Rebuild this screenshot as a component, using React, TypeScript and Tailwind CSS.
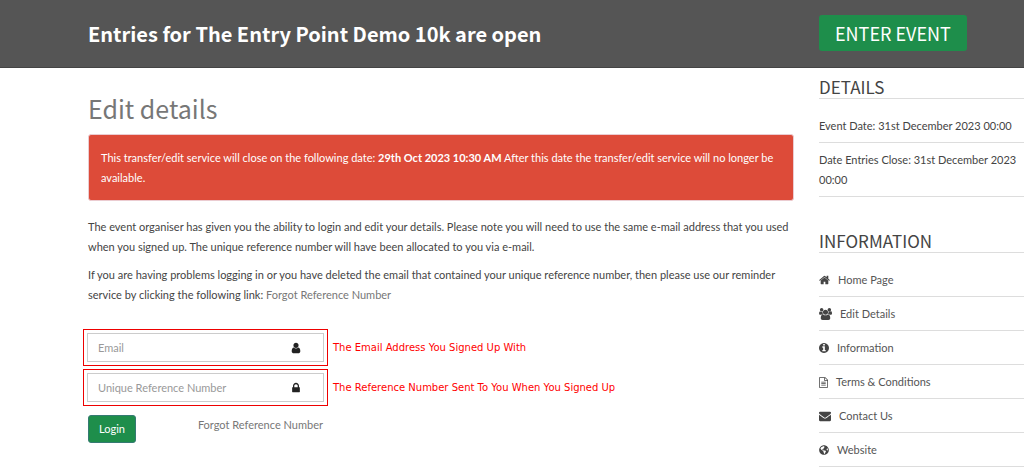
import React from 'react';
import { FaGlobeAmericas } from 'react-icons/fa';

const icons = {
  home: {
    viewBox: '64 0 1664 1792',
    className: 'h-3 w-[11px]',
    d: 'M1472 992v480q0 26-19 45t-45 19h-384v-384h-256v384h-384q-26 0-45-19t-19-45v-480q0-1 .5-3t.5-3l575-474 575 474q1 2 1 6zm223-69l-62 74q-8 9-21 11h-3q-13 0-21-7l-692-577-692 577q-12 8-24 7-13-2-21-11l-62-74q-8-10-7-23.5t11-21.5l719-599q32-26 76-26t76 26l244 204v-195q0-14 9-23t23-9h192q14 0 23 9t9 23v408l219 182q10 8 11 21.5t-7 23.5z',
  },
  users: {
    viewBox: '64 0 1920 1792',
    className: 'h-3 w-[13px]',
    d: 'M657 896q-162 5-265 128h-134q-82 0-138-40.5t-56-118.5q0-353 124-353 6 0 43.5 21t97.5 42.5 119 21.5q67 0 133-23-5 37-5 66 0 159 93 292zm1071 637q0 120-73 189.5t-194 69.5h-874q-121 0-194-69.5t-73-189.5q0-53 3.5-103.5t14-109 26.5-108.5 43-97.5 62-81 85.5-53.5 111.5-20q10 0 43 21.5t73 48 107 48 135 21.5 135-21.5 107-48 73-48 43-21.5q61 0 111.5 20t85.5 53.5 62 81 43 97.5 26.5 108.5 14 109 3.5 103.5zm-1024-1277q0 106-75 181t-181 75-181-75-75-181 75-181 181-75 181 75 75 181zm704 384q0 159-112.5 271.5t-271.5 112.5-271.5-112.5-112.5-271.5 112.5-271.5 271.5-112.5 271.5 112.5 112.5 271.5zm576 225q0 78-56 118.5t-138 40.5h-134q-103-123-265-128 93-133 93-292 0-29-5-66 66 23 133 23 59 0 119-21.5t97.5-42.5 43.5-21q124 0 124 353zm-128-609q0 106-75 181t-181 75-181-75-75-181 75-181 181-75 181 75 75 181z',
  },
  info: {
    viewBox: '128 128 1536 1536',
    className: 'h-[10px] w-[10px]',
    d: 'M1152 1376v-160q0-14-9-23t-23-9h-96v-512q0-14-9-23t-23-9h-320q-14 0-23 9t-9 23v160q0 14 9 23t23 9h96v320h-96q-14 0-23 9t-9 23v160q0 14 9 23t23 9h448q14 0 23-9t9-23zm-128-896v-160q0-14-9-23t-23-9h-192q-14 0-23 9t-9 23v160q0 14 9 23t23 9h192q14 0 23-9t9-23zm640 416q0 209-103 385.5t-279.5 279.5-385.5 103-385.5-103-279.5-279.5-103-385.5 103-385.5 279.5-279.5 385.5-103 385.5 103 279.5 279.5 103 385.5z',
  },
  file: {
    viewBox: '128 0 1536 1792',
    className: 'h-[11px] w-[9px]',
    d: 'M1596 380q28 28 48 76t20 88v1152q0 40-28 68t-68 28h-1344q-40 0-68-28t-28-68v-1600q0-40 28-68t68-28h896q40 0 88 20t76 48zm-444-244v376h376q-10-29-22-41l-313-313q-12-12-41-22zm384 1528v-1024h-416q-40 0-68-28t-28-68v-416h-768v1536h1280zm-1024-864q0-14 9-23t23-9h704q14 0 23 9t9 23v64q0 14-9 23t-23 9h-704q-14 0-23-9t-9-23v-64zm736 224q14 0 23 9t9 23v64q0 14-9 23t-23 9h-704q-14 0-23-9t-9-23v-64q0-14 9-23t23-9h704zm0 256q14 0 23 9t9 23v64q0 14-9 23t-23 9h-704q-14 0-23-9t-9-23v-64q0-14 9-23t23-9h704z',
  },
  envelope: {
    viewBox: '0 0 1792 1792',
    className: 'h-3 w-3',
    d: 'M1792 710v794q0 66-47 113t-113 47h-1472q-66 0-113-47t-47-113v-794q44 49 101 87 362 246 497 345 57 42 92.5 65.5t94.5 48 110 24.5h2q51 0 110-24.5t94.5-48 92.5-65.5q170-123 498-345 57-39 100-87zm0-294q0 79-49 151t-122 123q-376 261-468 325-10 7-42.5 31t-54 38.5-52 32.5-57.5 27-50 9h-2q-23 0-50-9t-57.5-27-52-32.5-54-38.5-42.5-31q-91-64-262-182.5t-205-142.5q-62-42-117-115.5t-55-136.5q0-78 41.5-130t118.5-52h1472q65 0 112.5 47t47.5 113z',
  },
  user: {
    viewBox: '0 0 1792 1792',
    className: 'h-3 w-3',
    d: 'M1536 1399q0 109-62.5 187t-150.5 78h-854q-88 0-150.5-78t-62.5-187q0-85 8.5-160.5t31.5-152 58.5-131 94-89 134.5-34.5q131 128 313 128t313-128q76 0 134.5 34.5t94 89 58.5 131 31.5 152 8.5 160.5zm-256-887q0 159-112.5 271.5t-271.5 112.5-271.5-112.5-112.5-271.5 112.5-271.5 271.5-112.5 271.5 112.5 112.5 271.5z',
  },
  lock: {
    viewBox: '0 0 1792 1792',
    className: 'h-3 w-3',
    d: 'M640 768h512v-192q0-106-75-181t-181-75-181 75-75 181v192zm832 96v576q0 40-28 68t-68 28h-960q-40 0-68-28t-28-68v-576q0-40 28-68t68-28h32v-192q0-184 132-316t316-132 316 132 132 316v192h32q40 0 68 28t28 68z',
  },
};

function Icon({ name }: { name: keyof typeof icons }) {
  const icon = icons[name];
  return (
    <svg viewBox={icon.viewBox} className={icon.className} fill="currentColor" aria-hidden="true">
      <path d={icon.d} />
    </svg>
  );
}

const links = [
  { icon: <Icon name="home" />, label: 'Home Page' },
  { icon: <Icon name="users" />, label: 'Edit Details' },
  { icon: <Icon name="info" />, label: 'Information' },
  { icon: <Icon name="file" />, label: 'Terms & Conditions' },
  { icon: <Icon name="envelope" />, label: 'Contact Us' },
  { icon: <FaGlobeAmericas size={10} />, label: 'Website' },
];

const fields = [
  { id: 'email', type: 'email', label: 'Email', icon: <Icon name="user" />, hint: 'The Email Address You Signed Up With' },
  { id: 'reference', type: 'text', label: 'Unique Reference Number', icon: <Icon name="lock" />, hint: 'The Reference Number Sent To You When You Signed Up' },
];

function SideHeading({ children }: { children: React.ReactNode }) {
  return (
    <h2 className="border-b border-[#dddddd] pb-[2px] font-['Noto_Sans_CJK_SC',sans-serif] text-[17px] leading-[18px] text-[#444444]">
      {children}
    </h2>
  );
}

export default function App() {
  return (
    <div className="bg-white font-['Lato','Noto_Sans_CJK_SC',sans-serif] text-[11px] leading-5 text-[#444444]">
      <header className="flex h-[68px] items-center gap-[25px] border-b border-[#444444] bg-[#555555] pl-[88px] font-['Noto_Sans_CJK_SC',sans-serif] text-white">
        <p className="flex-1 text-xl font-bold">Entries for The Entry Point Demo 10k are open</p>
        <div className="w-[205px] pb-[2px]">
          <button type="button" className="h-9 rounded-[3px] bg-[#1e8e4b] px-4 text-lg leading-8">ENTER EVENT</button>
        </div>
      </header>

      <div className="flex gap-[25px] pl-[88px]">
        <main className="min-w-0 flex-1 pt-[22px]">
          <h1 className="font-['Noto_Sans_CJK_SC',sans-serif] text-[25px] leading-9 text-[#777777]">Edit details</h1>
          <div className="mt-2 rounded-[3px] border border-[#ebccd1] bg-[#dd4b39] px-3 pt-[13px] pb-3 text-white">
            This transfer/edit service will close on the following date: <strong>29th Oct 2023 10:30 AM</strong> After this
            date the transfer/edit service will no longer be available.
          </div>
          <p className="mt-4">
            The event organiser has given you the ability to login and edit your details. Please note you will need to use
            the same e-mail address that you used when you signed up. The unique reference number will have been allocated
            to you via e-mail.
          </p>
          <p className="mt-2">
            If you are having problems logging in or you have deleted the email that contained your unique reference
            number, then please use our reminder service by clicking the following link:{' '}
            <a href="#forgot" className="text-[#777777]">Forgot Reference Number</a>
          </p>

          <form className="mt-6">
            <div className="-ml-[5px] flex flex-col gap-[3px]">
              {fields.map((field) => (
                <div key={field.id} className="flex items-center gap-[5px]">
                  <div className="w-[245px] border border-[#ee0000] p-[3px]">
                    <label htmlFor={field.id} className="flex h-[29px] items-center border border-[#cccccc] pr-[21px] pl-[10px] text-[#222222]">
                      <input
                        id={field.id}
                        type={field.type}
                        placeholder={field.label}
                        aria-label={field.label}
                        className="min-w-0 flex-1 outline-none placeholder:text-[#999999]"
                      />
                      {field.icon}
                    </label>
                  </div>
                  <span className="font-['DejaVu_Sans',sans-serif] text-[10px] text-[#ff0000]">{field.hint}</span>
                </div>
              ))}
            </div>
            <div className="mt-[9px] flex w-[235px] items-start justify-between">
              <button type="submit" className="h-7 rounded-[3px] border border-[#357a72] bg-[#1e8e4b] px-[10px] text-white">Login</button>
              <a href="#forgot" className="text-[#777777]">Forgot Reference Number</a>
            </div>
          </form>
        </main>

        <aside className="w-[205px] pt-[10px]">
          <SideHeading>DETAILS</SideHeading>
          <ul className="mt-[10px]">
            <li className="border-b border-[#dddddd] pt-[7px] pb-[6px]">Event Date: 31st December 2023 00:00</li>
            <li className="border-b border-[#dddddd] pt-[7px] pb-[6px]">Date Entries Close: 31st December 2023 00:00</li>
          </ul>
          <div className="mt-[35px]">
            <SideHeading>INFORMATION</SideHeading>
          </div>
          <ul className="mt-[10px]">
            {links.map((link) => (
              <li key={link.label} className="border-b border-[#dddddd] pt-[7px] pb-[6px]">
                <a href="#" className="flex items-center gap-2 text-[#555555]">
                  <span className="text-[#444444]">{link.icon}</span>
                  {link.label}
                </a>
              </li>
            ))}
          </ul>
        </aside>
      </div>
    </div>
  );
}
